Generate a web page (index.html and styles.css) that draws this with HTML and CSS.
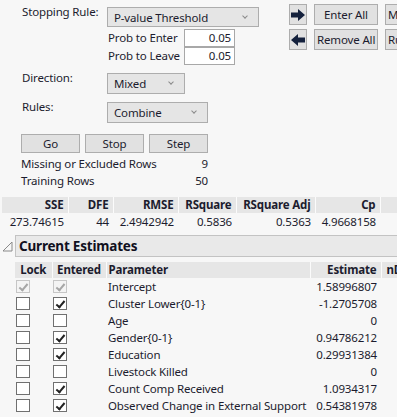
FILE: index.html
```html
<!DOCTYPE html>
<html lang="en">
  <head>
    <meta charset="utf-8" />
    <link rel="stylesheet" href="styles.css">
  </head>
  <body>
    <div class="launch">
      <!-- stepwise settings -->
      <div class="settings">
        <div class="field rule-row">
          <span class="lbl">Stopping Rule:</span>
          <div class="combo combo-rule">P-value Threshold<span class="chev"></span></div>
        </div>
        <div class="prob prob-first">
          <span class="prob-lbl">Prob to Enter</span>
          <div class="num">0.05</div>
        </div>
        <div class="prob">
          <span class="prob-lbl">Prob to Leave</span>
          <div class="num">0.05</div>
        </div>
        <div class="field sel-row">
          <span class="lbl">Direction:</span>
          <div class="combo combo-dir">Mixed<span class="chev"></span></div>
        </div>
        <div class="field sel-row">
          <span class="lbl">Rules:</span>
          <div class="combo combo-rules">Combine<span class="chev"></span></div>
        </div>
        <div class="actions">
          <button class="btn">Go</button>
          <button class="btn">Stop</button>
          <button class="btn">Step</button>
        </div>
        <div class="info info-first"><span>Missing or Excluded Rows</span><span>9</span></div>
        <div class="info"><span>Training Rows</span><span>50</span></div>
      </div>

      <!-- enter / remove buttons -->
      <div class="move">
        <button class="arrow-btn">
          <svg width="14" height="12" viewBox="0 0 14 12"><path d="M0 3.5h7V0l7 6-7 6V8.5H0z" fill="#14213d"/></svg>
        </button>
        <button class="btn move-btn">Enter All</button>
        <button class="btn move-btn">Make Model</button>
        <button class="arrow-btn">
          <svg width="14" height="12" viewBox="0 0 14 12"><path d="M14 3.5H7V0L0 6l7 6V8.5h7z" fill="#14213d"/></svg>
        </button>
        <button class="btn move-btn">Remove All</button>
        <button class="btn move-btn">Run Model</button>
      </div>
    </div>

    <!-- fit statistics -->
    <table class="stats">
      <tr>
        <th class="c-sse">SSE</th>
        <th class="c-dfe">DFE</th>
        <th class="c-rmse">RMSE</th>
        <th class="c-rsq">RSquare</th>
        <th class="c-adj">RSquare Adj</th>
        <th class="c-cp">Cp</th>
        <th class="c-rest"></th>
      </tr>
      <tr>
        <td>273.74615</td>
        <td>44</td>
        <td>2.4942942</td>
        <td>0.5836</td>
        <td>0.5363</td>
        <td>4.9668158</td>
        <td></td>
      </tr>
    </table>

    <!-- current estimates -->
    <div class="outline">
      <svg class="disclose" width="11" height="11" viewBox="0 0 11 11">
        <path d="M1 10H10V1Z" fill="none" stroke="#8a8a8a" stroke-width="1"/>
      </svg>
      <div class="outline-title">Current Estimates</div>
    </div>

    <table class="est">
      <tr>
        <th class="c-lock">Lock</th>
        <th class="c-entered">Entered</th>
        <th class="c-param">Parameter</th>
        <th class="c-estimate">Estimate</th>
        <th class="c-ndf">nDF</th>
      </tr>
      <tr>
        <td><span class="chk off checked"></span></td>
        <td><span class="chk off checked"></span></td>
        <td class="param">Intercept</td>
        <td class="val">1.58996807</td>
        <td></td>
      </tr>
      <tr>
        <td><span class="chk"></span></td>
        <td><span class="chk checked"></span></td>
        <td class="param">Cluster Lower{0-1}</td>
        <td class="val">-1.2705708</td>
        <td></td>
      </tr>
      <tr>
        <td><span class="chk"></span></td>
        <td><span class="chk"></span></td>
        <td class="param">Age</td>
        <td class="val">0</td>
        <td></td>
      </tr>
      <tr>
        <td><span class="chk"></span></td>
        <td><span class="chk checked"></span></td>
        <td class="param">Gender{0-1}</td>
        <td class="val">0.94786212</td>
        <td></td>
      </tr>
      <tr>
        <td><span class="chk"></span></td>
        <td><span class="chk checked"></span></td>
        <td class="param">Education</td>
        <td class="val">0.29931384</td>
        <td></td>
      </tr>
      <tr>
        <td><span class="chk"></span></td>
        <td><span class="chk"></span></td>
        <td class="param">Livestock Killed</td>
        <td class="val">0</td>
        <td></td>
      </tr>
      <tr>
        <td><span class="chk"></span></td>
        <td><span class="chk checked"></span></td>
        <td class="param">Count Comp Received</td>
        <td class="val">1.0934317</td>
        <td></td>
      </tr>
      <tr>
        <td><span class="chk"></span></td>
        <td><span class="chk checked"></span></td>
        <td class="param">Observed Change in External Support</td>
        <td class="val">0.54381978</td>
        <td></td>
      </tr>
    </table>
  </body>
</html>
```

FILE: styles.css
```css
/* page */
body {
  margin: 0;
  width: 397px;
  height: 417px;
  overflow: hidden;
  background-color: #f7f7f7;
  color: #1c1c2e;
  font-family: "Noto Sans", "Liberation Sans", sans-serif;
  font-size: 11.5px;
  letter-spacing: -0.15px;
  line-height: 14px;
  white-space: nowrap;
}

.launch {
  display: flex;
  width: 397px;
  overflow: hidden;
}

.settings {
  width: 289px;
  flex: none;
}

/* label + dropdown rows */
.field {
  display: flex;
  align-items: flex-start;
  padding-left: 22px;
}

.rule-row {
  margin-top: 7px;
}

.sel-row {
  margin-top: 8px;
}

.lbl {
  width: 85px;
  flex: none;
  margin-top: -2px;
}

.combo {
  position: relative;
  box-sizing: border-box;
  height: 21px;
  padding: 2px 0 0 6px;
  background-color: #e5e5e5;
  border: 1px solid #adadad;
  line-height: 15px;
}

.combo-rule {
  width: 152px;
  height: 20px;
}

.combo-dir {
  width: 78px;
}

.combo-rules {
  width: 101px;
}

.chev {
  position: absolute;
  right: 11px;
  top: 6px;
  width: 3px;
  height: 3px;
  border-right: 1px solid #8a8a8a;
  border-bottom: 1px solid #8a8a8a;
  transform: rotate(45deg);
}

/* probability inputs */
.prob {
  display: flex;
  align-items: center;
  padding-left: 108px;
  height: 18px;
}

.prob-first {
  margin-top: 2px;
}

.prob-lbl {
  width: 76px;
  flex: none;
}

.num {
  box-sizing: border-box;
  width: 51px;
  height: 18px;
  padding-right: 3px;
  background-color: #fff;
  border: 1px solid #a8a8a8;
  text-align: right;
  line-height: 16px;
}

/* buttons */
.btn {
  box-sizing: border-box;
  height: 19px;
  padding: 0;
  background-color: #e1e1e1;
  border: 1px solid #adadad;
  color: inherit;
  font: inherit;
  letter-spacing: inherit;
  line-height: 15px;
  white-space: nowrap;
}

.actions {
  display: flex;
  gap: 5px;
  margin-top: 11px;
  padding-left: 21px;
}

.actions .btn {
  width: 59px;
}

.info {
  display: flex;
  justify-content: space-between;
  width: 187px;
  margin-left: 21px;
  line-height: 17px;
}

.info-first {
  margin-top: 2px;
}

/* enter / remove panel */
.move {
  display: grid;
  grid-template-columns: 18px 64px 80px;
  grid-auto-rows: 21px;
  column-gap: 7px;
  row-gap: 4px;
  padding-top: 4px;
  flex: none;
}

.arrow-btn {
  display: flex;
  align-items: center;
  justify-content: center;
  box-sizing: border-box;
  padding: 0;
  background-color: #e1e1e1;
  border: 1px solid #adadad;
}

.move-btn {
  height: 21px;
  padding: 0 2px;
}

.move-btn:nth-child(3n) {
  text-align: left;
}

/* fit statistics */
.stats {
  margin: 8px 0 0 2px;
  border-collapse: collapse;
  table-layout: fixed;
  width: 400px;
}

.stats th,
.stats td {
  box-sizing: border-box;
  padding: 0 4px 0 0;
  text-align: right;
}

.stats th {
  height: 16px;
  background-color: #e6e6e6;
  border-right: 1px solid #fbfbfb;
  font-weight: bold;
  line-height: 16px;
}

.stats td {
  height: 18px;
  line-height: 18px;
}

.c-sse { width: 66px; }
.c-dfe { width: 45px; }
.c-rmse { width: 65px; }
.c-rsq { width: 58px; }
.c-adj { width: 79px; }
.c-cp { width: 65px; }
.c-rest { width: 22px; }

/* outline header */
.outline {
  display: flex;
  align-items: center;
  margin-top: 4px;
}

.disclose {
  margin: 0 2px 0 2px;
  flex: none;
}

.outline-title {
  flex: 1;
  box-sizing: border-box;
  height: 22px;
  padding-left: 3px;
  background-color: #e9e9e9;
  border: 1px solid #c3c3c3;
  border-right: none;
  font-size: 13.5px;
  letter-spacing: -0.2px;
  font-weight: bold;
  line-height: 20px;
  color: #101020;
}

/* current estimates table */
.est {
  margin: 5px 0 0 15px;
  border-collapse: collapse;
  table-layout: fixed;
  width: 400px;
}

.est th,
.est td {
  box-sizing: border-box;
  padding: 0;
  overflow: hidden;
}

.est th {
  height: 16px;
  background-color: #e6e6e6;
  border-right: 1px solid #fbfbfb;
  font-weight: bold;
  line-height: 16px;
}

.est td {
  height: 17px;
  line-height: 17px;
}

.c-lock { width: 37px; text-align: center; }
.c-entered { width: 54px; text-align: center; }
.c-param { width: 204px; text-align: left; padding-left: 2px !important; }
.c-estimate { width: 71px; text-align: right; padding-right: 4px !important; }
.c-ndf { width: 34px; text-align: left; padding-left: 5px !important; }

.param {
  padding-left: 2px !important;
}

.val {
  text-align: right;
  padding-right: 4px !important;
}

/* checkboxes */
.chk {
  display: block;
  position: relative;
  box-sizing: border-box;
  width: 14px;
  height: 13px;
  margin-left: 1px;
  background-color: #fff;
  border: 1px solid #707070;
}

.chk.checked::after {
  content: "";
  position: absolute;
  left: 4px;
  top: 1px;
  width: 3px;
  height: 7px;
  border-right: 2px solid #222;
  border-bottom: 2px solid #222;
  transform: rotate(40deg);
}

.chk.off {
  background-color: #f4f4f4;
  border-color: #c6c6c6;
}

.chk.off.checked::after {
  border-color: #a6a6a6;
}
```
